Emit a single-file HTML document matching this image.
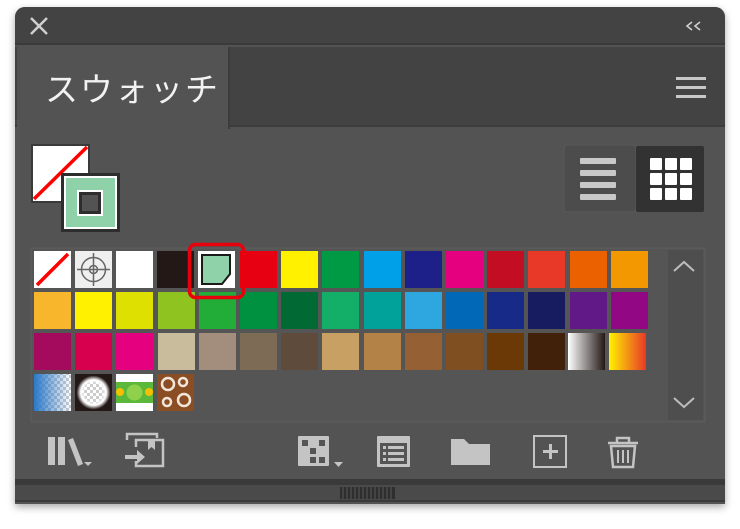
<!DOCTYPE html>
<html><head><meta charset="utf-8"><style>
*{margin:0;padding:0;box-sizing:border-box}
body{width:740px;height:529px;background:#fff;position:relative;overflow:hidden;font-family:"Liberation Sans","Noto Sans CJK JP",sans-serif}
.a{position:absolute}
.sw{position:absolute;width:37px;height:37px}
</style></head><body>
<div class="a" style="left:15px;top:7px;width:710px;height:497px;background:#535353;border-radius:10px 10px 0 0;box-shadow:0 3px 8px rgba(0,0,0,.35);overflow:hidden">
 <div class="a" style="left:0;top:0;width:710px;height:38px;background:#434343;border-bottom:2px solid #3a3a3a"></div>
 <div class="a" style="left:0;top:40px;width:710px;height:80px;background:#434343;border-bottom:2px solid #3c3c3c"></div>
 <div class="a" style="left:2px;top:40px;width:213px;height:82px;background:#535353;border-right:2px solid #3c3c3c"></div>
 <div class="a" style="left:30px;top:58px;color:#f2f2f2;font-size:33px;letter-spacing:2px;font-family:'Noto Sans CJK JP',sans-serif;line-height:44px">スウォッチ</div>
 <div class="a" style="left:0;top:472px;width:710px;height:6px;background:#3a3a3a"></div>
 <div class="a" style="left:0;top:478px;width:710px;height:17px;background:#4a4a4a;border-bottom:2px solid #3a3a3a"></div>
</div>
<svg class="a" style="left:0;top:0" width="740" height="529">
 <path d="M31 18 L47 34 M47 18 L31 34" stroke="#cfcfcf" stroke-width="2.5"/>
 <path d="M692 22 l-5 4 l5 4 M700 22 l-5 4 l5 4" stroke="#cfcfcf" stroke-width="1.6" fill="none"/>
 <g fill="#c8c8c8"><rect x="676" y="77" width="30" height="3"/><rect x="676" y="86" width="30" height="3"/><rect x="676" y="95" width="30" height="3"/></g>
 <!-- fill/stroke -->
 <rect x="31" y="144" width="59" height="59" fill="#3a3a3a"/>
 <rect x="33" y="146" width="55" height="55" fill="#fff"/>
 <path d="M34 199 L87 147" stroke="#f00" stroke-width="3.5"/>
 <rect x="61" y="173" width="59" height="59" fill="#2d2d2d"/>
 <rect x="64" y="176" width="53" height="53" fill="#fff"/>
 <rect x="66" y="178" width="49" height="49" fill="#8fd1a9"/>
 <rect x="77" y="190" width="26" height="26" fill="#fff"/>
 <rect x="79" y="192" width="22" height="22" fill="#2d2d2d"/>
 <rect x="82" y="195" width="16" height="16" fill="#535353"/>
 <!-- view buttons -->
 <rect x="564" y="145" width="72" height="67" rx="3" fill="#4c4c4c" stroke="#5a5a5a"/>
 <rect x="636" y="146" width="68" height="66" rx="2" fill="#323232"/>
 <g fill="#c8c8c8"><rect x="580" y="158" width="36" height="6" rx="1"/><rect x="580" y="170" width="36" height="6" rx="1"/><rect x="580" y="182" width="36" height="6" rx="1"/><rect x="580" y="194" width="36" height="6" rx="1"/></g>
 <g fill="#fff"><rect x="650" y="158" width="12" height="12" rx="1"/><rect x="665" y="158" width="12" height="12" rx="1"/><rect x="680" y="158" width="12" height="12" rx="1"/><rect x="650" y="173" width="12" height="12" rx="1"/><rect x="665" y="173" width="12" height="12" rx="1"/><rect x="680" y="173" width="12" height="12" rx="1"/><rect x="650" y="188" width="12" height="12" rx="1"/><rect x="665" y="188" width="12" height="12" rx="1"/><rect x="680" y="188" width="12" height="12" rx="1"/></g>
 <!-- swatch container -->
 <rect x="31" y="248" width="674" height="174" fill="#555" stroke="#5e5e5e"/>
 <rect x="668" y="250" width="35" height="170" fill="#4e4e4e"/>
 <path d="M674 271 l10 -9 l10 9" stroke="#bdbdbd" stroke-width="2" fill="none"/>
 <path d="M674 398 l10 9 l10 -9" stroke="#bdbdbd" stroke-width="2" fill="none"/>
</svg>
<div id="g"></div>
<svg class="a" style="left:0;top:0" width="740" height="529">
 <!-- row1 specials -->
 <rect x="34" y="251" width="37" height="37" fill="#fff"/>
 <path d="M37 285 L68 254" stroke="#f00" stroke-width="3.5"/>
 <rect x="75" y="251" width="37" height="37" fill="#efefef"/>
 <circle cx="93.5" cy="269.5" r="12" stroke="#666" stroke-width="1.5" fill="none"/>
 <circle cx="93.5" cy="269.5" r="4" stroke="#666" stroke-width="1.5" fill="none"/>
 <path d="M93.5 253 V286 M77 269.5 H110" stroke="#666" stroke-width="1.5"/>
 <rect x="116" y="251" width="37" height="37" fill="#fff"/>
 <rect x="157" y="251" width="37" height="37" fill="#231815"/>
 <rect x="198" y="251" width="37" height="37" fill="#fff"/>
 <path d="M202 255 H230 V274 L222 284 H202 Z" fill="#8fd1a9" stroke="#1a1a1a" stroke-width="2"/>
 <rect x="189.5" y="244.5" width="54" height="53" rx="6" fill="none" stroke="#e8000d" stroke-width="3.5"/>
 <!-- row4 patterns -->
 <defs>
  <pattern id="ck" width="6" height="6" patternUnits="userSpaceOnUse"><rect width="6" height="6" fill="#fff"/><rect width="3" height="3" fill="#ccc"/><rect x="3" y="3" width="3" height="3" fill="#ccc"/></pattern>
  <linearGradient id="bl"><stop offset="0" stop-color="#2a78c8"/><stop offset="1" stop-color="#2a78c8" stop-opacity="0"/></linearGradient>
  <radialGradient id="rw"><stop offset=".5" stop-color="#fff" stop-opacity="0"/><stop offset=".75" stop-color="#fff"/><stop offset="1" stop-color="#231815"/></radialGradient>
  <linearGradient id="wb"><stop offset="0" stop-color="#fff"/><stop offset="1" stop-color="#231815"/></linearGradient>
  <linearGradient id="yr"><stop offset="0" stop-color="#fff100"/><stop offset="1" stop-color="#e83828"/></linearGradient>
 </defs>
 <rect x="34" y="374" width="37" height="37" fill="url(#ck)"/><rect x="34" y="374" width="37" height="37" fill="url(#bl)"/>
 <rect x="75" y="374" width="37" height="37" fill="#231815"/><circle cx="93.5" cy="392.5" r="15" fill="url(#ck)"/><circle cx="93.5" cy="392.5" r="17" fill="url(#rw)"/>
 <rect x="116" y="374" width="37" height="37" fill="#5cb83a"/><rect x="116" y="374" width="37" height="8" fill="#fff"/><rect x="116" y="403" width="37" height="8" fill="#fff"/><circle cx="134.5" cy="392.5" r="8" fill="#8fd14a"/><circle cx="120" cy="392" r="4" fill="#f5c000"/><circle cx="149" cy="392" r="4" fill="#f5c000"/>
 <rect x="157" y="374" width="37" height="37" fill="#8a4d24"/><g stroke="#f3e6d8" stroke-width="2.5" fill="none"><circle cx="168" cy="384" r="6"/><circle cx="184" cy="400" r="6"/><circle cx="183" cy="382" r="4"/><circle cx="167" cy="402" r="4"/></g>
 <rect x="568" y="333" width="37" height="37" fill="url(#wb)"/>
 <rect x="609" y="333" width="37" height="37" fill="url(#yr)"/>
 <!-- bottom icons -->
 <g fill="#c4c4c4">
  <rect x="48" y="437" width="7" height="28"/><rect x="58" y="437" width="7" height="28"/><path d="M68 440 l5 -2 l10 26 l-5 2 z"/><path d="M84 462 h8 l-4 4 z"/>
  <path d="M127 440 v-6 h30 v4" stroke="#c4c4c4" stroke-width="2.5" fill="none"/>
  <path d="M136 447 v-7 h27 v26 h-27 v-5" stroke="#c4c4c4" stroke-width="2.5" fill="none"/>
  <path d="M148 441 h7 v9 l-3.5 -3 l-3.5 3 z"/>
  <path d="M125 455 h12 v-5 l8 7 l-8 7 v-5 h-12 z"/>
  <rect x="298" y="436" width="31" height="30" rx="1"/><path d="M334 462 h9 l-4.5 5 z"/>
  <g fill="#555"><rect x="302" y="440" width="6" height="6"/><rect x="319" y="440" width="6" height="6"/><rect x="310" y="448" width="6" height="6"/><rect x="310" y="457" width="6" height="6"/><rect x="319" y="457" width="6" height="6"/></g>
  <rect x="377" y="436" width="33" height="31" rx="1"/>
  <g fill="#555"><rect x="380" y="443" width="27" height="21"/></g>
  <g><rect x="383" y="446" width="3" height="3"/><rect x="388" y="446" width="16" height="3"/><rect x="383" y="452" width="3" height="3"/><rect x="388" y="452" width="16" height="3"/><rect x="383" y="458" width="3" height="3"/><rect x="388" y="458" width="16" height="3"/></g>
  <path d="M451 439 h13 l5 5 h21 v21 h-39 z"/>
  <rect x="534" y="436" width="32" height="31" fill="none" stroke="#c4c4c4" stroke-width="2"/><path d="M549 444 h3 v6 h6 v3 h-6 v6 h-3 v-6 h-6 v-3 h6 z"/>
  <path d="M608 443 h30 M617 443 v-5 h12 v5" stroke="#c4c4c4" stroke-width="2.5" fill="none"/>
  <path d="M611 446 h24 l-2 21 h-20 z" fill="none" stroke="#c4c4c4" stroke-width="2.5"/>
  <rect x="617" y="450" width="2" height="13"/><rect x="622" y="450" width="2" height="13"/><rect x="627" y="450" width="2" height="13"/>
 </g>
 <g fill="#2e2e2e"><rect x="340" y="487" width="55" height="12"/></g>
 <g stroke="#5a5a5a" stroke-width="1"><path d="M343 487v12M347 487v12M351 487v12M355 487v12M359 487v12M363 487v12M367 487v12M371 487v12M375 487v12M379 487v12M383 487v12M387 487v12M391 487v12"/></g>
</svg>
<script>
var rows=[
[null,null,null,null,null,"#e60012","#fff100","#009944","#00a0e9","#1d2088","#e4007f","#c30d23","#e83828","#eb6100","#f39800"],
["#f8b62d","#fff100","#dde000","#8fc31f","#22ac38","#009140","#006934","#13ae67","#00a29a","#2ea7e0","#0068b7","#172a88","#171c61","#601986","#920783"],
["#a40b5d","#d7004f","#e4007f","#c9bc9c","#a38e7d","#7d6b56","#5e4b3c","#c9a063","#b28247","#956134","#7f4f21","#6a3906","#42210b",null,null]];
var h="";
rows.forEach(function(r,i){r.forEach(function(c,j){if(c)h+='<div class="sw" style="left:'+(34+j*41.2)+'px;top:'+(251+i*41)+'px;background:'+c+'"></div>';});});
document.getElementById("g").innerHTML=h;
</script>
</body></html>
